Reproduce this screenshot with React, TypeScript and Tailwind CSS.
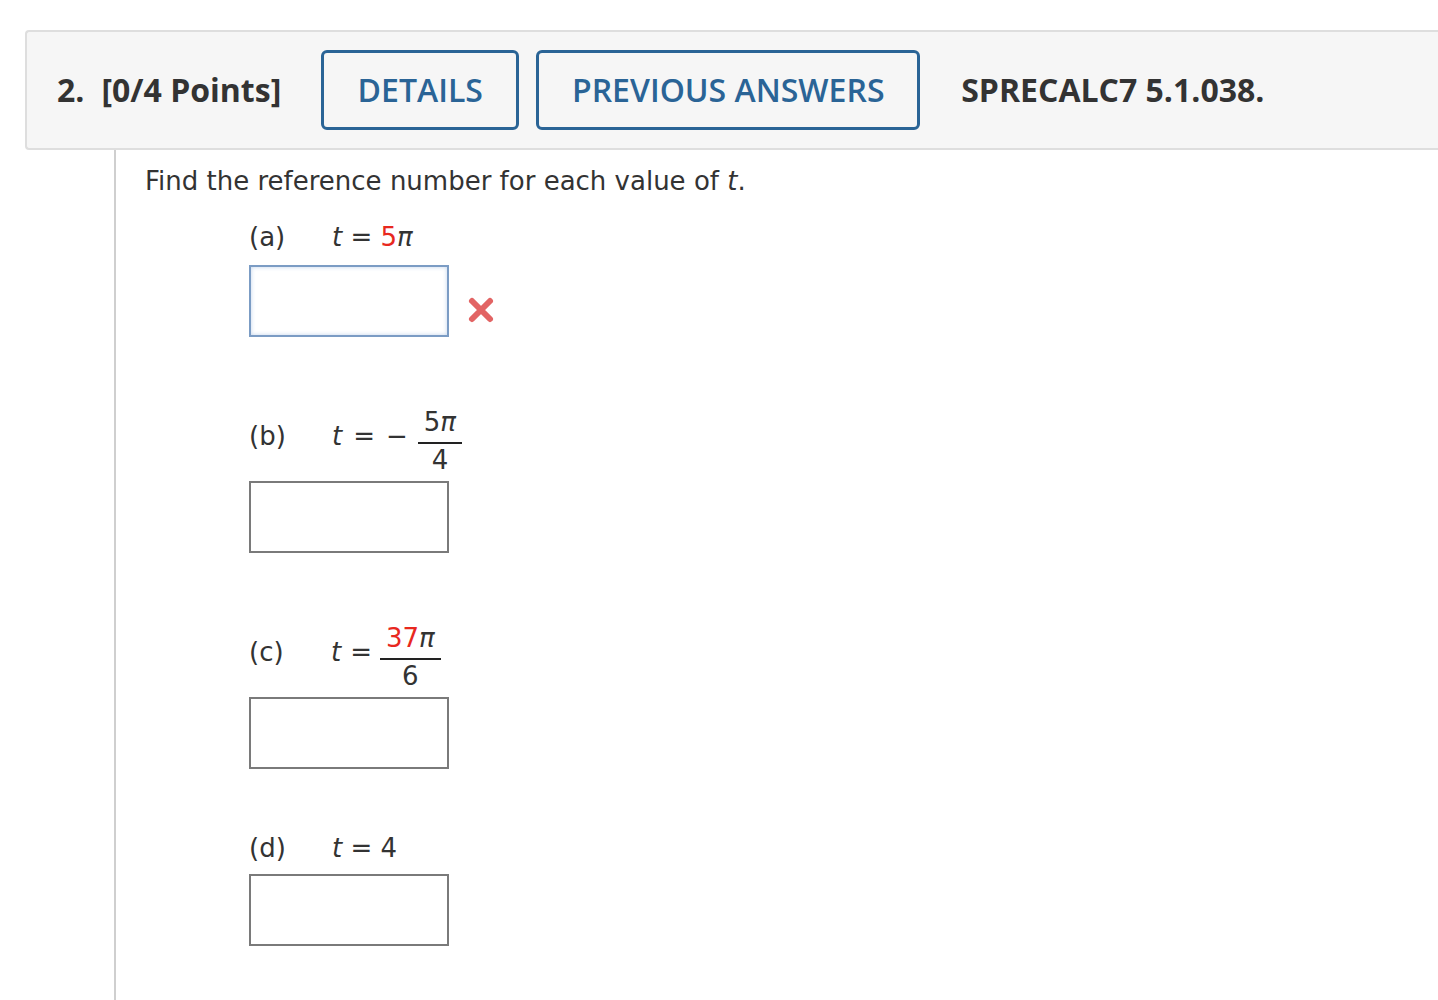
const body = { fontFamily: '"DejaVu Sans", Verdana, sans-serif' };
const head = { fontFamily: '"Open Sans", Arial, sans-serif' };

function T() {
  return <span className="italic">t</span>;
}

function Pi() {
  return <span className="italic">π</span>;
}

function Frac({ num, den, pad }: { num: React.ReactNode; den: React.ReactNode; pad: string }) {
  return (
    <span className="inline-flex flex-col items-center mt-[10px]">
      <span className={`${pad} leading-[30px] pb-[5px]`}>{num}</span>
      <span className="self-stretch h-[2px] bg-[#222]" />
      <span className={`${pad} leading-[32px]`}>{den}</span>
    </span>
  );
}

function Box({ active }: { active?: boolean }) {
  return (
    <div
      className={`w-[200px] h-[72px] bg-white ${
        active
          ? 'border-2 border-[#7b9cc4] shadow-[inset_0_0_4px_rgba(120,160,210,0.45)]'
          : 'border-2 border-[#7a7a7a]'
      }`}
    />
  );
}

function Cross() {
  return (
    <svg width="28" height="28" viewBox="0 0 28 28" className="ml-[18px] mt-[31px]">
      <path d="M5 5 L23 23 M23 5 L5 23" stroke="#e26464" strokeWidth="6" strokeLinecap="round" />
    </svg>
  );
}

export default function App() {
  return (
    <div className="bg-white min-h-[1000px] pt-[30px] pl-[25px] text-[#333] overflow-hidden">
      {/* header bar */}
      <div
        className="flex items-center h-[120px] border-2 border-r-0 border-[#dedede] rounded-l-[4px] bg-[#f6f6f6] pl-[30px] text-[#333]"
        style={head}
      >
        <span className="text-[32px] font-bold">2.</span>
        <span className="text-[32px] font-bold ml-[17px]">[0/4 Points]</span>
        <button className="ml-[40px] h-[80px] w-[198px] border-[3px] border-[#2a6496] rounded-[6px] text-[#2a6496] text-[32px] font-semibold">
          DETAILS
        </button>
        <button className="ml-[17px] h-[80px] w-[384px] border-[3px] border-[#2a6496] rounded-[6px] text-[#2a6496] text-[32px] font-semibold">
          PREVIOUS ANSWERS
        </button>
        <span className="ml-[41px] text-[32px] font-bold">SPRECALC7 5.1.038.</span>
      </div>

      {/* body */}
      <div className="ml-[89px] border-l-2 border-[#cfcfcf] pl-[29px] pt-[14px] min-h-[860px] text-[26px]" style={body}>
        <p className="leading-[34px]">
          Find the reference number for each value of <T />.
        </p>

        <div className="pl-[104px] mt-[22px]">
          {/* (a) */}
          <div className="flex items-center h-[34px]">
            <span className="w-[83px]">(a)</span>
            <span>
              <T /> = <span className="text-[#e8281e]">5</span>
              <Pi />
            </span>
          </div>
          <div className="flex mt-[11px]">
            <Box active />
            <Cross />
          </div>

          {/* (b) */}
          <div className="flex items-center h-[66px] mt-[66px]">
            <span className="w-[83px]">(b)</span>
            <span className="flex items-center">
              <T />
              <span className="ml-[11px]">=</span>
              <span className="ml-[11px]">−</span>
              <span className="ml-[10px]">
                <Frac
                  pad="px-[6px]"
                  num={
                    <>
                      5<Pi />
                    </>
                  }
                  den="4"
                />
              </span>
            </span>
          </div>
          <div className="mt-[12px]">
            <Box />
          </div>

          {/* (c) */}
          <div className="flex items-center h-[66px] mt-[66px]">
            <span className="w-[82px]">(c)</span>
            <span className="flex items-center">
              <T />
              <span className="ml-[9px]">=</span>
              <span className="ml-[8px]">
                <Frac
                  pad="px-[6px]"
                  num={
                    <>
                      <span className="text-[#e8281e]">37</span>
                      <Pi />
                    </>
                  }
                  den="6"
                />
              </span>
            </span>
          </div>
          <div className="mt-[12px]">
            <Box />
          </div>

          {/* (d) */}
          <div className="flex items-center h-[34px] mt-[62px]">
            <span className="w-[83px]">(d)</span>
            <span>
              <T /> = 4
            </span>
          </div>
          <div className="mt-[9px]">
            <Box />
          </div>
        </div>
      </div>
    </div>
  );
}
